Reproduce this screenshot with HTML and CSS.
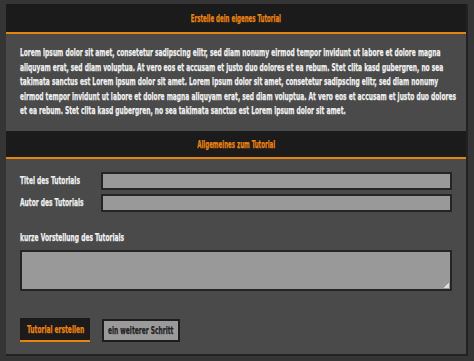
FILE: index.html
```html
<!DOCTYPE html>
<html lang="de">
<head>
<meta charset="utf-8">
<title>Tutorial erstellen</title>
<link rel="stylesheet" href="styles.css">
</head>
<body>
<div class="frame">
  <div class="bar"><span class="cx mid">Erstelle dein eigenes Tutorial</span></div>
  <div class="intro">
    <div class="intro-text"><span class="ln">Lorem ipsum dolor sit amet, consetetur sadipscing elitr, sed diam nonumy eirmod tempor invidunt ut labore et dolore magna</span><span class="ln">aliquyam erat, sed diam voluptua. At vero eos et accusam et justo duo dolores et ea rebum. Stet clita kasd gubergren, no sea</span><span class="ln">takimata sanctus est Lorem ipsum dolor sit amet. Lorem ipsum dolor sit amet, consetetur sadipscing elitr, sed diam nonumy</span><span class="ln">eirmod tempor invidunt ut labore et dolore magna aliquyam erat, sed diam voluptua. At vero eos et accusam et justo duo dolores</span><span class="ln">et ea rebum. Stet clita kasd gubergren, no sea takimata sanctus est Lorem ipsum dolor sit amet.</span></div>
  </div>
  <div class="bar bar2"><span class="cx mid">Allgemeines zum Tutorial</span></div>
  <div class="form">
    <div class="row"><label class="lbl"><span class="cx">Titel des Tutorials</span></label><div class="field"></div></div>
    <div class="row"><label class="lbl"><span class="cx">Autor des Tutorials</span></label><div class="field"></div></div>
    <div class="lbl-top"><span class="cx">kurze Vorstellung des Tutorials</span></div>
    <div class="area"><span class="grip"></span></div>
    <div class="buttons">
      <div class="btn primary"><span class="cx">Tutorial erstellen</span></div>
      <div class="btn secondary"><span class="cx">ein weiterer Schritt</span></div>
    </div>
  </div>
</div>
</body>
</html>
```
FILE: styles.css
```css
html, body {
  margin: 0;
  padding: 0;
}
body {
  background: #353535;
  width: 474px;
  height: 361px;
  overflow: hidden;
  font-family: "DejaVu Sans Condensed", "DejaVu Sans", sans-serif;
  font-weight: bold;
  font-size: 11px;
  line-height: 14px;
  color: #f0f0f0;
}
.cx {
  display: block;
  width: max-content;
  white-space: nowrap;
  font-size: 11px;
  line-height: 14px;
  transform: scaleX(0.6);
  transform-origin: 0 50%;
  -webkit-text-stroke: 0.25px currentColor;
}
.cx.mid {
  font-size: 10.5px;
  transform: scaleX(0.58);
  transform-origin: 50% 50%;
}
.frame {
  margin: 4px 0 0 6px;
  width: 462px;
  height: 352px;
  background: #4a4a4a;
  border-right: 2px solid #222222;
  border-bottom: 2px solid #222222;
  box-sizing: border-box;
  display: flex;
  flex-direction: column;
  overflow: hidden;
}
.bar {
  height: 28px;
  flex: none;
  background: #1b1b1b;
  border-bottom: 2px solid #e8840e;
  color: #ec8410;
  display: flex;
  align-items: center;
  justify-content: center;
  box-sizing: content-box;
}
.bar2 {
  height: 26px;
}
.intro {
  height: 97px;
  flex: none;
  box-sizing: border-box;
  padding: 12px 14px 0 14px;
  overflow: hidden;
}
.intro-text {
  width: 432px;
  font-size: 11px;
  line-height: 14.6px;
}
.ln {
  display: block;
  width: 432px;
  white-space: nowrap;
  transform: scaleX(0.6);
  transform-origin: 0 0;
  -webkit-text-stroke: 0.25px currentColor;
}
.form {
  padding: 13px 14px 0 14px;
  display: flex;
  flex-direction: column;
}
.row {
  display: flex;
  align-items: center;
  height: 18px;
  margin-bottom: 4px;
}
.lbl {
  width: 81px;
  flex: none;
}
.field {
  flex: 1;
  height: 18px;
  box-sizing: border-box;
  background: #999999;
  border: 2px solid #252525;
}
.lbl-top {
  margin-top: 15px;
  height: 14px;
}
.area {
  position: relative;
  margin-top: 5px;
  height: 41px;
  box-sizing: border-box;
  background: #999999;
  border: 2px solid #252525;
}
.grip {
  position: absolute;
  right: 1px;
  bottom: 1px;
  width: 6px;
  height: 6px;
  background: linear-gradient(135deg, transparent 50%, #dddddd 50%);
}
.buttons {
  display: flex;
  gap: 12px;
  margin-top: 27px;
}
.btn {
  height: 24px;
  box-sizing: border-box;
  display: flex;
  align-items: center;
  overflow: hidden;
}
.primary {
  background: #1b1b1b;
  color: #ec8410;
  border-bottom: 2px solid #e8840e;
  width: 70px;
  padding: 2px 0 0 7px;
}
.secondary {
  background: #9a9a9a;
  color: #222222;
  border: 2px solid #1e1e1e;
  width: 78px;
  padding: 0 0 0 4px;
  margin-top: 1px;
  height: 23px;
}
```
